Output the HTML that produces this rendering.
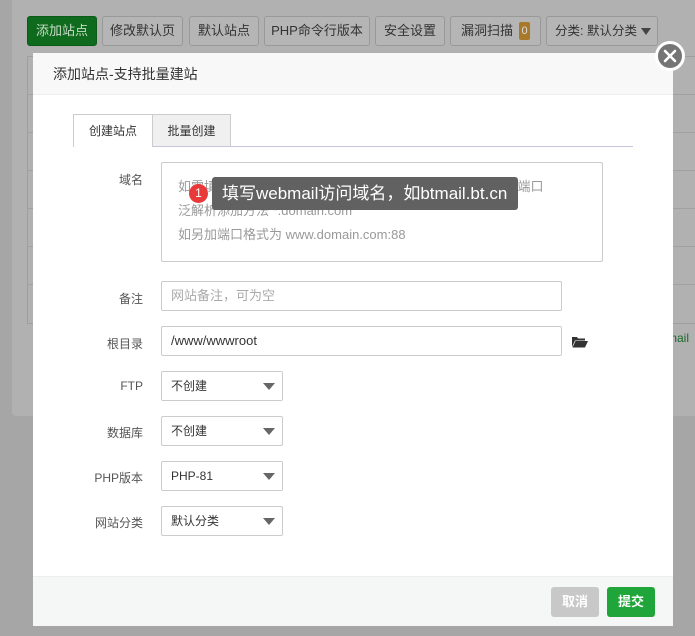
<!DOCTYPE html>
<html><head><meta charset="utf-8"><style>
*{box-sizing:border-box;margin:0;padding:0}
body{width:695px;height:636px;overflow:hidden;position:relative;background:#a6a6a6;font-family:"Liberation Sans","Noto Sans CJK SC",sans-serif;font-size:13px;color:#333}
.card{position:absolute;left:12px;top:-10px;width:700px;height:426px;background:#b1b1b1;border-radius:4px}
.tbl{position:absolute;left:15px;top:66px;width:700px;height:268px;border:1px solid #9e9e9e}
.card .ln{position:absolute;left:15px;right:0;height:1px;background:#a0a0a0}
.btn{position:absolute;top:16px;height:30px;border:1px solid #999;border-radius:3px;background:#b5b5b5;color:#333;font-size:13px;line-height:28px;text-align:center}
.modal{position:absolute;left:33px;top:53px;width:640px;height:573px;background:#fff}
.hd{height:42px;background:#f8f8f8;border-bottom:1px solid #eee;padding-left:20px;line-height:42px;font-size:14px;color:#333}
.ft{position:absolute;left:0;bottom:0;width:640px;height:50px;background:#f5f7f6;border-top:1px solid #eee}
.lbl{position:absolute;width:110px;text-align:right;font-size:12px;color:#555}
.inp{position:absolute;border:1px solid #ccc;border-radius:2px;background:#fff;font-size:13px;padding-left:9px;line-height:28px}
.sel{position:absolute;left:128px;width:122px;height:30px;border:1px solid #ccc;border-radius:2px;padding-left:9px;line-height:28px;font-size:12px;color:#333}
.sel:after{content:"";position:absolute;right:7px;top:11px;border-left:6px solid transparent;border-right:6px solid transparent;border-top:7px solid #666}
</style></head><body>
<div class="card">
<div class="tbl"></div>
<div class="ln" style="top:104px"></div><div class="ln" style="top:142px"></div><div class="ln" style="top:180px"></div><div class="ln" style="top:218px"></div><div class="ln" style="top:256px"></div><div class="ln" style="top:294px"></div>
<div style="position:absolute;left:655px;top:341px;color:#1a6b2a;font-size:12px">mail</div>
</div>
<div class="btn" style="left:27px;width:70px;background:#0e6b1d;border-color:#0b5a17;color:#c9dcc9">添加站点</div>
<div class="btn" style="left:102px;width:81px">修改默认页</div>
<div class="btn" style="left:189px;width:70px">默认站点</div>
<div class="btn" style="left:264px;width:106px">PHP命令行版本</div>
<div class="btn" style="left:375px;width:70px">安全设置</div>
<div class="btn" style="left:450px;width:91px;text-align:left;padding-left:10px">漏洞扫描<span style="position:absolute;left:68px;top:5px;width:11px;height:18px;background:#a8792b;border-radius:2px;color:#ddd;font-size:11px;line-height:18px;text-align:center">0</span></div>
<div class="btn" style="left:546px;width:112px;text-align:left;padding-left:8px;font-size:12.5px">分类: 默认分类<span style="position:absolute;right:6px;top:11px;border-left:5px solid transparent;border-right:5px solid transparent;border-top:7px solid #444"></span></div>

<div class="modal">
<div class="hd">添加站点-支持批量建站</div>
<div style="position:absolute;left:40px;top:93px;width:560px;height:1px;background:#c8c4dc"></div>
<div style="position:absolute;left:40px;top:61px;width:80px;height:33px;background:#fff;border:1px solid #ccc;border-bottom:none;line-height:32px;text-align:center;font-size:12px">创建站点</div>
<div style="position:absolute;left:119px;top:61px;width:79px;height:32px;background:#f0f0f0;border:1px solid #ccc;border-bottom:none;line-height:32px;text-align:center;font-size:12px">批量创建</div>

<div class="lbl" style="left:0;top:118px">域名</div>
<div class="inp" style="left:128px;top:109px;width:442px;height:100px;color:#999;line-height:24px;padding-top:12px;padding-left:16px">如需填写多个域名，请换行填写，每行一个域名，默认为80端口<br>泛解析添加方法 *.domain.com<br>如另加端口格式为 www.domain.com:88</div>

<div class="lbl" style="left:0;top:237px">备注</div>
<div class="inp" style="left:128px;top:228px;width:401px;height:30px;color:#aaa">网站备注，可为空</div>
<div class="lbl" style="left:0;top:282px">根目录</div>
<div class="inp" style="left:128px;top:273px;width:401px;height:30px;color:#333">/www/wwwroot</div>
<svg style="position:absolute;left:539px;top:283px" width="16" height="12" viewBox="0 0 16 12"><path d="M0 1h5l1 1.5h7v2H3L0 11z" fill="#333"/><path d="M3.5 5H16l-3 6.5H0.5z" fill="#333"/></svg>

<div class="lbl" style="left:0;top:326px">FTP</div><div class="sel" style="top:318px">不创建</div>
<div class="lbl" style="left:0;top:371px">数据库</div><div class="sel" style="top:363px">不创建</div>
<div class="lbl" style="left:0;top:416px">PHP版本</div><div class="sel" style="top:408px">PHP-81</div>
<div class="lbl" style="left:0;top:461px">网站分类</div><div class="sel" style="top:453px">默认分类</div>

<div class="ft">
<div style="position:absolute;left:518px;top:10px;width:48px;height:30px;background:#c8c8c8;border-radius:3px;color:#fff;line-height:30px;text-align:center;font-weight:bold">取消</div>
<div style="position:absolute;left:574px;top:10px;width:48px;height:30px;background:#20a53a;border-radius:3px;color:#fff;line-height:30px;text-align:center;font-weight:bold">提交</div>
</div>
</div>

<div style="position:absolute;left:212px;top:177px;width:306px;height:33px;background:#616161;border-radius:3px;color:#fff;font-size:17px;line-height:33px;padding-left:10px;white-space:nowrap;overflow:hidden">填写webmail访问域名，如btmail.bt.cn</div>
<div style="position:absolute;left:189px;top:184px;width:19px;height:19px;border-radius:50%;background:#e83a3a;color:#fff;font-size:12px;line-height:19px;text-align:center">1</div>

<div style="position:absolute;left:655px;top:41px;width:30px;height:30px;border-radius:50%;background:#757575;border:3px solid #fff"><svg width="24" height="24" viewBox="0 0 24 24"><path d="M7 7L17 17M17 7L7 17" stroke="#fff" stroke-width="2.6" stroke-linecap="round"/></svg></div>
</body></html>
